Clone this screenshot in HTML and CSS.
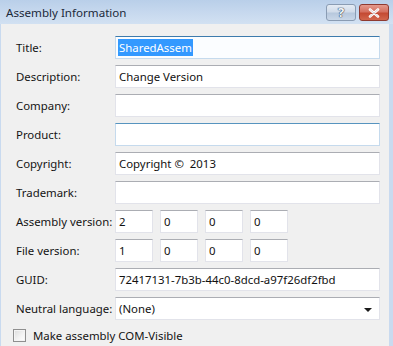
FILE: index.html
```html
<!DOCTYPE html>
<html>
<head>
<meta charset="utf-8">
<link rel="stylesheet" href="styles.css">
</head>
<body>
<div class="window">
  <div class="titlebar">
    <span class="title">Assembly Information</span>
    <div class="caption-buttons">
      <div class="cbtn help"><span>?</span></div>
      <div class="cbtn close">
        <svg width="14" height="10" viewBox="0 0 14 10"><path d="M3 1.5 L11 8.5 M11 1.5 L3 8.5" stroke="#fff" stroke-width="2.6" stroke-linecap="round"/><path d="M3 1.5 L11 8.5 M11 1.5 L3 8.5" stroke="#5a1a14" stroke-width="0.6" stroke-linecap="round" opacity="0.35"/></svg>
      </div>
    </div>
  </div>
  <div class="content">
    <div class="form">
      <label class="lbl">Title:</label>
      <div class="box focus"><span class="sel">SharedAssem</span></div>

      <label class="lbl">Description:</label>
      <div class="box">Change Version</div>

      <label class="lbl">Company:</label>
      <div class="box"></div>

      <label class="lbl">Product:</label>
      <div class="box hover"></div>

      <label class="lbl">Copyright:</label>
      <div class="box">Copyright ©&nbsp; 2013</div>

      <label class="lbl">Trademark:</label>
      <div class="box"></div>

      <label class="lbl">Assembly version:</label>
      <div class="versions">
        <div class="box small">2</div>
        <div class="box small">0</div>
        <div class="box small">0</div>
        <div class="box small">0</div>
      </div>

      <label class="lbl">File version:</label>
      <div class="versions">
        <div class="box small">1</div>
        <div class="box small">0</div>
        <div class="box small">0</div>
        <div class="box small">0</div>
      </div>

      <label class="lbl">GUID:</label>
      <div class="box">72417131-7b3b-44c0-8dcd-a97f26df2fbd</div>

      <label class="lbl">Neutral language:</label>
      <div class="box combo"><span>(None)</span><span class="arrow"></span></div>
    </div>
    <div class="check-row">
      <span class="checkbox"></span>
      <span class="check-label">Make assembly COM-Visible</span>
    </div>
  </div>
</div>
</body>
</html>
```
FILE: styles.css
```css
html, body {
  margin: 0;
  padding: 0;
}
body {
  width: 393px;
  height: 346px;
  overflow: hidden;
  font-family: "Noto Sans", "Open Sans", sans-serif;
  font-size: 11.4px;
  color: #141414;
  background: #c9daef;
}
.window {
  width: 393px;
  height: 346px;
  display: flex;
  flex-direction: column;
}
.titlebar {
  height: 24px;
  flex: none;
  display: flex;
  align-items: center;
  justify-content: space-between;
  padding-left: 6px;
  background: linear-gradient(to bottom, #b9cfe9 0%, #c6d8ee 50%, #d2e1f2 100%);
}
.title {
  font-size: 11.6px;
  color: #1c2a3a;
}
.caption-buttons {
  display: flex;
  gap: 3px;
  margin-right: 4px;
  align-self: flex-start;
  margin-top: 4px;
}
.cbtn {
  height: 17px;
  border-radius: 3px;
  display: flex;
  align-items: center;
  justify-content: center;
  box-sizing: border-box;
}
.help {
  width: 30px;
  border: 1px solid #8a9cb3;
  background: linear-gradient(to bottom, #e4ebf4 0%, #d1dcea 45%, #b7c8dd 55%, #c9d7e8 100%);
  font-size: 13px;
  font-weight: bold;
  color: #f2f6fa;
  text-shadow: 0 0 1px #33445a, 0 0 1px #33445a, 0 0 1px #33445a;
}
.help span {
  line-height: 15px;
}
.close {
  width: 30px;
  border: 1px solid #8f3a30;
  background: linear-gradient(to bottom, #e49a8d 0%, #d5705f 45%, #c44a33 55%, #d2664c 100%);
}
.content {
  flex: 1;
  background: #f0f0f0;
  margin: 0 4px 0 1px;
  padding: 12px 0 0 15px;
}
.form {
  display: grid;
  grid-template-columns: 99px 265px;
  row-gap: 6px;
}
.lbl {
  display: flex;
  align-items: center;
  height: 23px;
  white-space: nowrap;
}
.box {
  height: 23px;
  box-sizing: border-box;
  background: #fff;
  border: 1px solid #e2e3ea;
  border-top-color: #abadb3;
  padding: 0 3px;
  display: flex;
  align-items: center;
  white-space: nowrap;
  color: #111111;
}
.box.focus {
  border-color: #c5daed;
  border-top-color: #3d7bad;
  background: #fbfdff;
  padding-left: 2px;
}
.box.hover {
  border-color: #c5daed;
  border-top-color: #5794bf;
}
.sel {
  background: #3399ff;
  color: #fff;
  padding: 0 1px;
  line-height: 17px;
}
.versions {
  display: flex;
  gap: 7px;
}
.box.small {
  width: 38px;
}
.combo {
  justify-content: space-between;
  padding-right: 7px;
}
.arrow {
  width: 0;
  height: 0;
  border-left: 4px solid transparent;
  border-right: 4px solid transparent;
  border-top: 4px solid #1a1a1a;
  margin-top: 2px;
}
.check-row {
  display: flex;
  align-items: center;
  gap: 7px;
  margin-top: 8px;
  margin-left: -3px;
}
.checkbox {
  width: 13px;
  height: 13px;
  box-sizing: border-box;
  border: 1px solid #8f8f8f;
  background: linear-gradient(135deg, #dcdcdc 0%, #f4f4f4 60%, #ffffff 100%);
  box-shadow: inset 0 0 0 1px #f4f4f4;
}
```
